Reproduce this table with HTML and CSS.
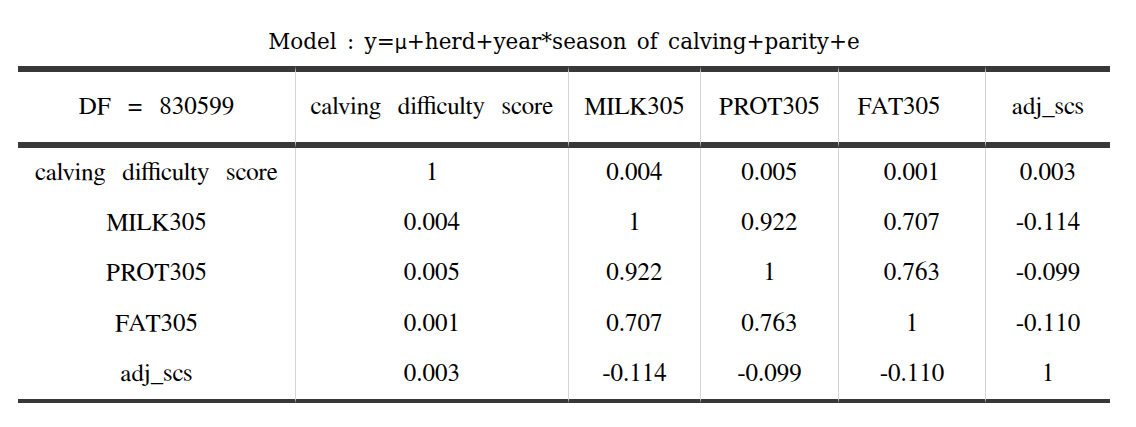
FILE: index.html
```html
<!DOCTYPE html>
<html>
<head>
<meta charset="utf-8">
<link rel="stylesheet" href="styles.css">
</head>
<body>
<div class="wrap">
  <div class="title">Model : y=<span class="mu">μ</span>+herd+year*season of calving+parity+e</div>
  <table class="corr">
    <colgroup>
      <col class="c1"><col class="c2"><col class="c3"><col class="c4"><col class="c5"><col class="c6">
    </colgroup>
    <thead>
      <tr>
        <th>DF = 830599</th>
        <th>calving difficulty score</th>
        <th>MILK305</th>
        <th>PROT305</th>
        <th class="fat">FAT305</th>
        <th>adj_scs</th>
      </tr>
    </thead>
    <tbody>
      <tr><td>calving difficulty score</td><td>1</td><td>0.004</td><td>0.005</td><td>0.001</td><td>0.003</td></tr>
      <tr><td>MILK305</td><td>0.004</td><td>1</td><td>0.922</td><td>0.707</td><td>-0.114</td></tr>
      <tr><td>PROT305</td><td>0.005</td><td>0.922</td><td>1</td><td>0.763</td><td>-0.099</td></tr>
      <tr><td>FAT305</td><td>0.001</td><td>0.707</td><td>0.763</td><td>1</td><td>-0.110</td></tr>
      <tr><td>adj_scs</td><td>0.003</td><td>-0.114</td><td>-0.099</td><td>-0.110</td><td>1</td></tr>
    </tbody>
  </table>
</div>
</body>
</html>
```

FILE: styles.css
```css
html, body {
  margin: 0;
  padding: 0;
  background: #ffffff;
}

body {
  font-family: FreeSerif, "Liberation Serif", serif;
  color: #000000;
}

.wrap {
  width: 1092px;
  padding: 27px 0 0 18px;
}

.title {
  text-align: center;
  font-family: "DejaVu Serif", serif;
  font-size: 21.5px;
  line-height: 30px;
  word-spacing: 3.5px;
  height: 39px;
}

.mu {
  font-family: "DejaVu Sans", sans-serif;
  font-size: 19px;
}

.corr {
  width: 1092px;
  border-collapse: separate;
  border-spacing: 0;
  table-layout: fixed;
  font-family: FreeSerif, "Liberation Serif", serif;
  font-size: 25px;
  word-spacing: 11px;
}

.c1 { width: 277px; }
.c2 { width: 273px; }
.c3 { width: 132px; }
.c4 { width: 138px; }
.c5 { width: 147px; }
.c6 { width: 125px; }

.corr th,
.corr td {
  font-weight: normal;
  text-align: center;
  vertical-align: middle;
  padding: 0;
  border-left: 1px solid #d4d4d4;
  white-space: nowrap;
}

.corr th:first-child,
.corr td:first-child {
  border-left: none;
}

.corr thead tr {
  height: 82px;
}

.corr thead th {
  border-top: 6px solid #383838;
  border-bottom: 6px solid #383838;
}

.corr th.fat {
  padding-right: 26px;
}

.corr tbody tr {
  height: 50.2px;
}

.corr tbody tr:last-child {
  height: 54.2px;
}

.corr tbody tr:last-child td {
  border-bottom: 4px solid #383838;
}
```
